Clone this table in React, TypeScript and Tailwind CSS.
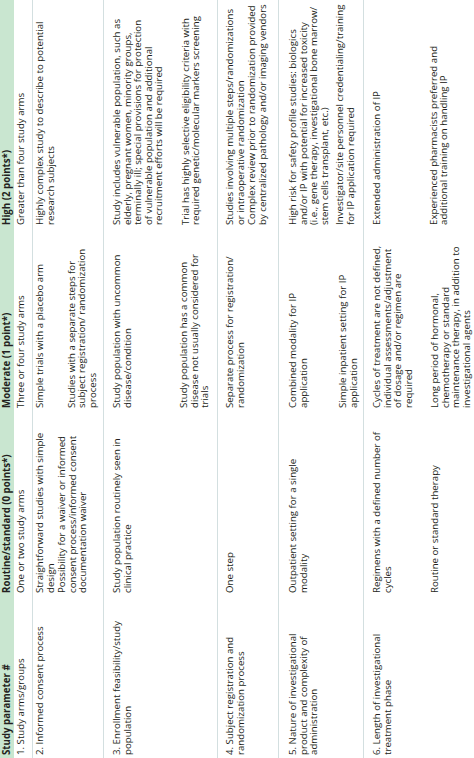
type Para = { lines: string[]; cls?: string };
type Row = { h: string; pt: string; border: boolean; cells: Para[][] };

const header = [
  "Study parameter #",
  "Routine/standard (0 points*)",
  "Moderate (1 point*)",
  "High (2 points*)",
];

const rows: Row[] = [
  {
    h: "h-[18px]",
    pt: "pt-[2px]",
    border: false,
    cells: [
      [{ lines: ["1. Study arms/groups"] }],
      [{ lines: ["One or two study arms"] }],
      [{ lines: ["Three or four study arms"] }],
      [{ lines: ["Greater than four study arms"] }],
    ],
  },
  {
    h: "h-[71px]",
    pt: "pt-[2px]",
    border: true,
    cells: [
      [{ lines: ["2. Informed consent process"] }],
      [
        { lines: ["Straightforward studies with simple", "design"] },
        {
          lines: [
            "Possibility for a waiver or informed",
            "consent process/informed consent",
            "documentation waiver",
          ],
          cls: "mt-[1px]",
        },
      ],
      [
        { lines: ["Simple trials with a placebo arm"] },
        {
          lines: [
            "Studies with a separate steps for",
            "subject registration/ randomization",
            "process",
          ],
          cls: "mt-[21px]",
        },
      ],
      [
        {
          lines: [
            "Highly complex study to describe to potential",
            "research subjects",
          ],
        },
      ],
    ],
  },
  {
    h: "h-[114px]",
    pt: "pt-[8px]",
    border: true,
    cells: [
      [{ lines: ["3. Enrollment feasibility/study", "population"] }],
      [{ lines: ["Study population routinely seen in", "clinical practice"] }],
      [
        { lines: ["Study population with uncommon", "disease/condition"] },
        {
          lines: [
            "Study population has a common",
            "disease not usually considered for",
            "trials",
          ],
          cls: "mt-[46px]",
        },
      ],
      [
        {
          lines: [
            "Study includes vulnerable population, such as",
            "elderly, pregnant women, minority groups,",
            "terminally ill; special provisions for protection",
            "of vulnerable population and additional",
            "recruitment efforts will be required",
          ],
        },
        {
          lines: [
            "Trial has highly selective eligibility criteria with",
            "required genetic/molecular markers screening",
          ],
          cls: "mt-[16px]",
        },
      ],
    ],
  },
  {
    h: "h-[61px]",
    pt: "pt-[7px]",
    border: true,
    cells: [
      [{ lines: ["4. Subject registration and", "randomization process"] }],
      [{ lines: ["One step"] }],
      [{ lines: ["Separate process for registration/", "randomization"] }],
      [
        {
          lines: [
            "Studies involving multiple steps/randomizations",
            "or intraoperative randomization",
          ],
        },
        {
          lines: [
            "Complex review prior to randomization provided",
            "by centralized pathology and/or imaging vendors",
          ],
          cls: "mt-[1px]",
        },
      ],
    ],
  },
  {
    h: "h-[85px]",
    pt: "pt-[9px]",
    border: true,
    cells: [
      [
        {
          lines: [
            "5. Nature of investigational",
            "product and complexity of",
            "administration",
          ],
        },
      ],
      [{ lines: ["Outpatient setting for a single", "modality"] }],
      [
        { lines: ["Combined modality for IP", "application"] },
        {
          lines: ["Simple inpatient setting for IP", "application"],
          cls: "mt-[29px]",
        },
      ],
      [
        {
          lines: [
            "High risk for safety profile studies: biologics",
            "and/or IP with potential for increased toxicity",
            "(i.e., gene therapy, investigational bone marrow/",
            "stem cells transplant, etc.)",
          ],
        },
        {
          lines: [
            "Investigator/site personnel credentialing/training",
            "for IP application required",
          ],
          cls: "mt-[5px]",
        },
      ],
    ],
  },
  {
    h: "h-[111px]",
    pt: "pt-[8px]",
    border: true,
    cells: [
      [{ lines: ["6. Length of investigational", "treatment phase"] }],
      [
        { lines: ["Regimens with a defined number of", "cycles"] },
        { lines: ["Routine or standard therapy"], cls: "mt-[37px]" },
      ],
      [
        {
          lines: [
            "Cycles of treatment are not defined,",
            "individual assessments/adjustment",
            "of dosage and/or regimen are",
            "required",
          ],
        },
        {
          lines: [
            "Long period of hormonal,",
            "chemotherapy or standard",
            "maintenance therapy, in addition to",
            "investigational agents",
          ],
          cls: "mt-[16px]",
        },
      ],
      [
        { lines: ["Extended administration of IP"] },
        {
          lines: [
            "Experienced pharmacists preferred and",
            "additional training on handling IP",
          ],
          cls: "mt-[46px]",
        },
      ],
    ],
  },
];

const cols = "grid grid-cols-[162px_185px_183px_228px]";

function Cell({ paras }: { paras: Para[] }) {
  return (
    <div className="pl-[3px]">
      {paras.map((p, i) => (
        <div key={i} className={p.cls}>
          {p.lines.map((l, j) => (
            <div key={j} className="whitespace-nowrap">
              {l}
            </div>
          ))}
        </div>
      ))}
    </div>
  );
}

export default function App() {
  return (
    <div className="w-[474px] h-[758px] overflow-hidden bg-white">
      {/* table is printed sideways: rotate the whole sheet */}
      <div className="w-[758px] h-[474px] origin-top-left -rotate-90 translate-y-[758px] font-['Open_Sans',sans-serif] text-[9.7px] leading-[10.5px] text-[#231f20]">
        <div className={`${cols} h-[14px] pt-[2px] bg-[#c9e6d0] font-bold`}>
          {header.map((h) => (
            <div key={h} className="pl-[3px] whitespace-nowrap">
              {h}
            </div>
          ))}
        </div>
        {rows.map((r, i) => (
          <div
            key={i}
            className={`${cols} ${r.h} ${r.pt} ${
              r.border ? "border-t border-[#d3dfe0]" : ""
            }`}
          >
            {r.cells.map((c, j) => (
              <Cell key={j} paras={c} />
            ))}
          </div>
        ))}
      </div>
    </div>
  );
}
